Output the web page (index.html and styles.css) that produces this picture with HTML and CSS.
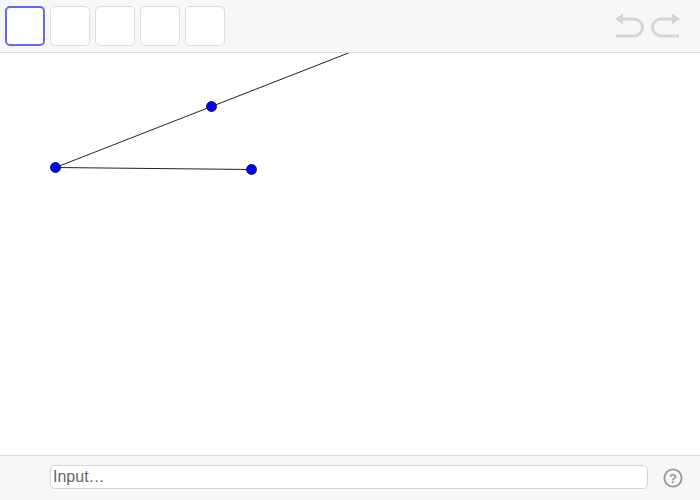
FILE: index.html
```html
<!DOCTYPE html>
<html>
<head>
<meta charset="utf-8">
<link rel="stylesheet" href="styles.css">
</head>
<body>
<div class="app">
  <div class="toolbar">
    <div class="tools">
      <div class="tool active"></div>
      <div class="tool"></div>
      <div class="tool"></div>
      <div class="tool"></div>
      <div class="tool"></div>
    </div>
    <div class="history">
      <svg class="hist" width="30" height="26" viewBox="0 0 30 26">
        <path d="M6 6 H20 A8.5 8.5 0 0 1 20 23 H2" fill="none" stroke="#d6d6d6" stroke-width="3"/>
        <path d="M1 6 L9 0.5 L9 11.5 Z" fill="#d6d6d6"/>
      </svg>
      <svg class="hist" width="30" height="26" viewBox="0 0 30 26">
        <path d="M24 6 H10 A8.5 8.5 0 0 0 10 23 H28" fill="none" stroke="#d6d6d6" stroke-width="3"/>
        <path d="M29 6 L21 0.5 L21 11.5 Z" fill="#d6d6d6"/>
      </svg>
    </div>
  </div>
  <div class="canvas">
    <svg width="700" height="402" viewBox="0 0 700 402">
      <line x1="55.5" y1="114.5" x2="351" y2="-1" stroke="#222" stroke-width="1"/>
      <line x1="55.5" y1="114.5" x2="251.5" y2="116.5" stroke="#222" stroke-width="1.2"/>
      <circle cx="211.5" cy="53.5" r="5" fill="#0000ff" stroke="#222244" stroke-width="1"/>
      <circle cx="55.5" cy="114.5" r="5" fill="#0000ff" stroke="#222244" stroke-width="1"/>
      <circle cx="251.5" cy="116.5" r="5" fill="#0000ff" stroke="#222244" stroke-width="1"/>
    </svg>
  </div>
  <div class="inputbar">
    <div class="input">Input…</div>
    <svg class="help" width="22" height="22" viewBox="0 0 22 22">
      <circle cx="11" cy="11" r="8.6" fill="none" stroke="#999" stroke-width="1.9"/>
      <text x="11" y="15.5" text-anchor="middle" font-family="Liberation Sans, Arial, sans-serif" font-size="13" font-weight="bold" fill="#999">?</text>
    </svg>
  </div>
</div>
</body>
</html>
```
FILE: styles.css
```css
html, body {
  margin: 0;
  padding: 0;
  background: #fff;
}
.app {
  width: 700px;
  height: 500px;
  display: flex;
  flex-direction: column;
  font-family: "Liberation Sans", Arial, sans-serif;
}
.toolbar {
  height: 52px;
  background: #f7f7f7;
  border-bottom: 1px solid #dcdcdc;
  display: flex;
  justify-content: space-between;
  align-items: flex-start;
}
.tools {
  display: flex;
  gap: 5px;
  padding: 6px 0 0 5px;
}
.tool {
  width: 38px;
  height: 38px;
  background: #fff;
  border: 1px solid #dddddd;
  border-radius: 5px;
}
.tool.active {
  width: 36px;
  height: 36px;
  border: 2px solid #6666ff;
}
.history {
  display: flex;
  gap: 7px;
  padding: 13px 19px 0 0;
}
.hist {
  display: block;
}
.canvas {
  height: 402px;
  background: #fff;
}
.canvas svg {
  display: block;
}
.inputbar {
  flex: 1;
  background: #f7f7f7;
  border-top: 1px solid #dcdcdc;
  display: flex;
  align-items: flex-start;
  padding: 9px 0 0 50px;
}
.input {
  width: 594px;
  height: 22px;
  background: #fff;
  border: 1px solid #d6d6d6;
  border-radius: 5px;
  padding: 0 0 0 2px;
  margin-right: 14px;
  font-size: 16px;
  line-height: 22px;
  color: #666;
}
.help {
  display: block;
  margin-top: 2px;
}
```
